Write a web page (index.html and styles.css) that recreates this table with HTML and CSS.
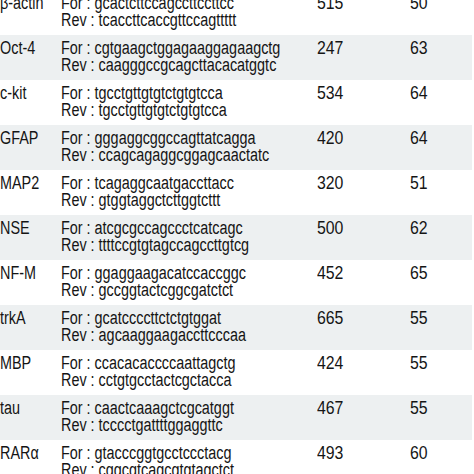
FILE: index.html
```html
<!DOCTYPE html>
<html>
<head>
<meta charset="utf-8">
<link rel="stylesheet" href="styles.css">
</head>
<body>
<div class="table">
  <div class="row"><div class="cell">β-actin</div><div class="cell"><div>For : gcactcttccagccttccttcc</div><div>Rev : tcaccttcaccgttccagttttt</div></div><div class="cell num">515</div><div class="cell num">50</div></div>
  <div class="row alt"><div class="cell">Oct-4</div><div class="cell"><div>For : cgtgaagctggagaaggagaagctg</div><div>Rev : caagggccgcagcttacacatggtc</div></div><div class="cell num">247</div><div class="cell num">63</div></div>
  <div class="row"><div class="cell">c-kit</div><div class="cell"><div>For : tgcctgttgtgtctgtgtcca</div><div>Rev : tgcctgttgtgtctgtgtcca</div></div><div class="cell num">534</div><div class="cell num">64</div></div>
  <div class="row alt"><div class="cell">GFAP</div><div class="cell"><div>For : gggaggcggccagttatcagga</div><div>Rev : ccagcagaggcggagcaactatc</div></div><div class="cell num">420</div><div class="cell num">64</div></div>
  <div class="row"><div class="cell">MAP2</div><div class="cell"><div>For : tcagaggcaatgaccttacc</div><div>Rev : gtggtaggctcttggtcttt</div></div><div class="cell num">320</div><div class="cell num">51</div></div>
  <div class="row alt"><div class="cell">NSE</div><div class="cell"><div>For : atcgcgccagccctcatcagc</div><div>Rev : ttttccgtgtagccagccttgtcg</div></div><div class="cell num">500</div><div class="cell num">62</div></div>
  <div class="row"><div class="cell">NF-M</div><div class="cell"><div>For : ggaggaagacatccaccggc</div><div>Rev : gccggtactcggcgatctct</div></div><div class="cell num">452</div><div class="cell num">65</div></div>
  <div class="row alt"><div class="cell">trkA</div><div class="cell"><div>For : gcatccccttctctgtggat</div><div>Rev : agcaaggaagaccttcccaa</div></div><div class="cell num">665</div><div class="cell num">55</div></div>
  <div class="row"><div class="cell">MBP</div><div class="cell"><div>For : ccacacaccccaattagctg</div><div>Rev : cctgtgcctactcgctacca</div></div><div class="cell num">424</div><div class="cell num">55</div></div>
  <div class="row alt"><div class="cell">tau</div><div class="cell"><div>For : caactcaaagctcgcatggt</div><div>Rev : tcccctgattttggaggttc</div></div><div class="cell num">467</div><div class="cell num">55</div></div>
  <div class="row"><div class="cell">RARα</div><div class="cell"><div>For : gtacccggtgcctccctacg</div><div>Rev : cggcgtcagcgtgtagctct</div></div><div class="cell num">493</div><div class="cell num">60</div></div>
</div>
</body>
</html>
```

FILE: styles.css
```css
html, body {
  margin: 0;
  padding: 0;
  background: #ffffff;
  overflow: hidden;
}
.table {
  margin-top: -10px;
  width: 472px;
  font-family: "Liberation Sans", Arial, sans-serif;
  font-size: 18px;
  line-height: 17px;
  color: #151515;
}
.row {
  display: grid;
  grid-template-columns: 61px 256px 93px 1fr;
  height: 45px;
  box-sizing: border-box;
  padding-top: 5px;
}
.row.alt {
  background: #edf0f1;
}
.cell {
  white-space: nowrap;
  transform: scaleX(0.8);
  transform-origin: 0 0;
}
.cell.num {
  transform: scaleX(0.88);
}
```
